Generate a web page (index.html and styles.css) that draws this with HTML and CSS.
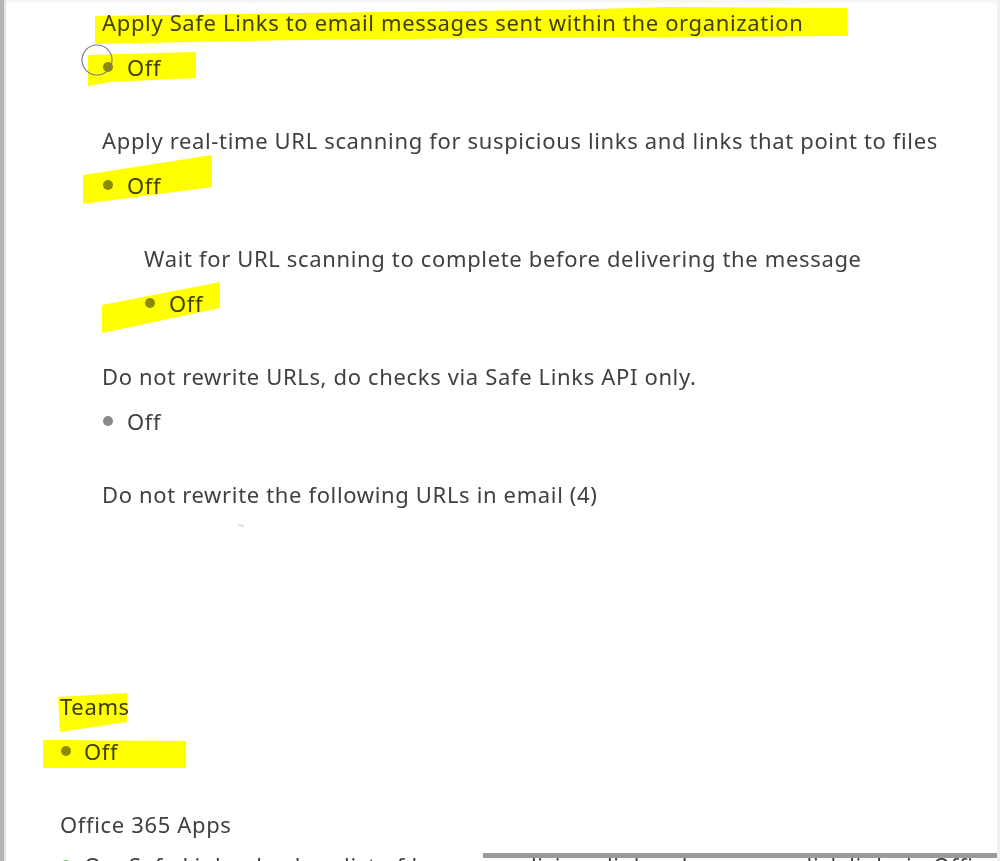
FILE: index.html
```html
<!DOCTYPE html>
<html>
<head>
<meta charset="utf-8">
<link rel="stylesheet" href="styles.css">
</head>
<body>
<div class="page">
  <div class="content">
    <div class="setting lvl1">
      <div class="title">Apply Safe Links to email messages sent within the organization</div>
      <div class="status"><span class="dot"></span><span>Off</span></div>
    </div>
    <div class="setting lvl1">
      <div class="title">Apply real-time URL scanning for suspicious links and links that point to files</div>
      <div class="status"><span class="dot"></span><span>Off</span></div>
    </div>
    <div class="setting lvl2">
      <div class="title">Wait for URL scanning to complete before delivering the message</div>
      <div class="status"><span class="dot"></span><span>Off</span></div>
    </div>
    <div class="setting lvl1">
      <div class="title">Do not rewrite URLs, do checks via Safe Links API only.</div>
      <div class="status"><span class="dot"></span><span>Off</span></div>
    </div>
    <div class="setting lvl1 urls">
      <div class="title">Do not rewrite the following URLs in email (4)</div>
      <div class="speck"></div>
    </div>
    <div class="setting lvl0 teams">
      <div class="title">Teams</div>
      <div class="status"><span class="dot"></span><span>Off</span></div>
    </div>
    <div class="setting lvl0 office">
      <div class="title">Office 365 Apps</div>
      <div class="status"><span class="dot on"></span><span>On: Safe Links checks a list of known, malicious links when users click links in Office apps</span></div>
    </div>
  </div>
  <div class="scrollbar"></div>
  <svg class="annot" width="1000" height="861" viewBox="0 0 1000 861">
    <g fill="#ffff00">
      <polygon points="95,16 300,13 560,10 667,7 847,8 848,36 667,37 500,38 300,40 140,43 95,44"/>
      <polygon points="88,55 196,52 196,78 110,82 88,86"/>
      <polygon points="83,175 212,155 212,187 83,204"/>
      <polygon points="102,305 220,282 220,308 102,333"/>
      <polygon points="58,697 127,693 127,722 60,732"/>
      <polygon points="43,740 186,741 186,768 43,768"/>
    </g>
  </svg>
  <svg class="cursor" width="1000" height="861" viewBox="0 0 1000 861">
    <circle cx="97" cy="60" r="15" fill="none" stroke="#7a7a8a" stroke-width="1.2"/>
  </svg>
</div>
</body>
</html>
```

FILE: styles.css
```css
html, body {
  margin: 0;
  padding: 0;
  background: #ffffff;
}

.page {
  position: relative;
  width: 1000px;
  height: 861px;
  overflow: hidden;
  box-sizing: border-box;
  border-left: 4px solid #b4b4b4;
  border-right: 3px solid #f1f1f1;
  background: linear-gradient(#f3f3f3, #ffffff 5px);
  font-family: "Noto Sans", "Open Sans", sans-serif;
  font-size: 22px;
  letter-spacing: 0.65px;
  color: #404040;
}

.content {
  padding-top: 7px;
  padding-left: 54px;
  border-left: 2px solid #e4e4e4;
  height: 100%;
  box-sizing: border-box;
}

.setting {
  margin-bottom: 43px;
}

.lvl1 { margin-left: 42px; }
.lvl2 { margin-left: 84px; }
.lvl0 { margin-left: 0; }

.title {
  height: 30px;
  line-height: 30px;
  white-space: nowrap;
}

.status {
  margin-top: 15px;
  height: 30px;
  line-height: 30px;
  display: flex;
  align-items: center;
  white-space: nowrap;
}

.office .status {
  margin-top: 11px;
}

.dot {
  width: 10px;
  height: 10px;
  border-radius: 50%;
  background: #8a8a8a;
  margin-left: 1px;
  margin-right: 14px;
  flex: none;
}

.lvl0 .dot {
  margin-left: 1px;
  margin-right: 13px;
}

.dot.on { background: #5cb85c; }

.urls {
  height: 212px;
  margin-bottom: 0;
}

.speck {
  width: 6px;
  height: 1px;
  background: #c8c8c8;
  margin-left: 136px;
  margin-top: 16px;
  transform: rotate(20deg);
}

.teams .title { color: #3a3a3a; }

.scrollbar {
  position: absolute;
  left: 479px;
  top: 853px;
  width: 520px;
  height: 5px;
  background: #9a9a9a;
}

.annot {
  position: absolute;
  left: -4px;
  top: 0;
  mix-blend-mode: multiply;
  pointer-events: none;
}

.cursor {
  position: absolute;
  left: -4px;
  top: 0;
  pointer-events: none;
}
```
